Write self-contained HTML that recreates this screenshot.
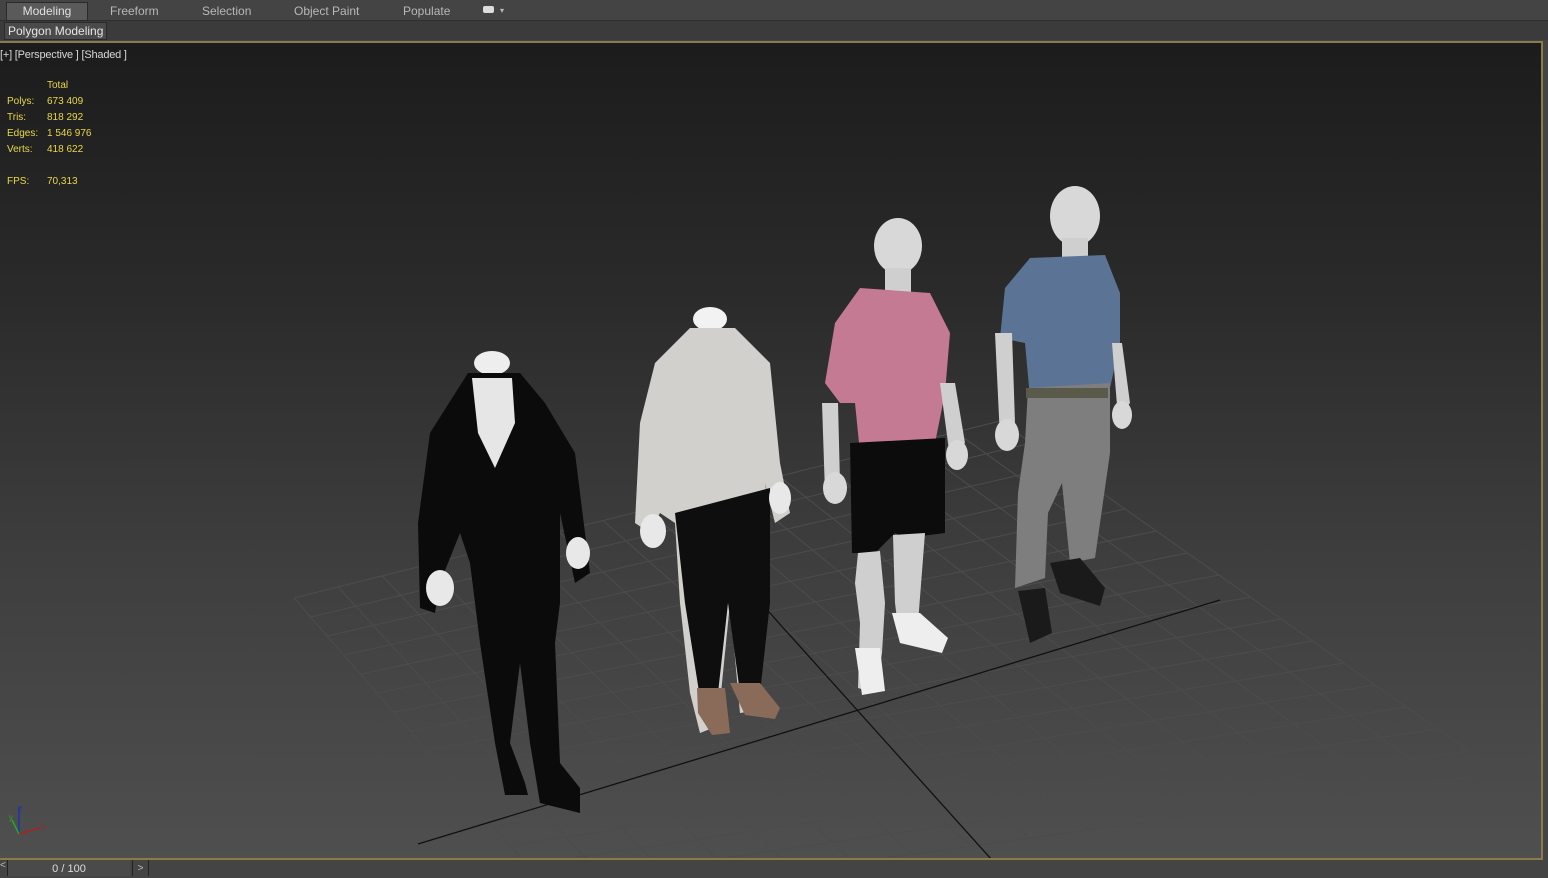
<!DOCTYPE html>
<html><head><meta charset="utf-8"><style>
html,body{margin:0;padding:0;width:1548px;height:876px;overflow:hidden;background:#444;font-family:"Liberation Sans",sans-serif}
#top{position:absolute;left:0;top:0;width:1548px;height:20px;background:#444;border-bottom:1px solid #2e2e2e}
.tab{position:absolute;top:4px;font-size:12px;color:#b8b8b8}
#mod{position:absolute;left:6px;top:2px;width:80px;height:17px;background:#5a5a5a;border:1px solid #2a2a2a;color:#e0e0e0;font-size:12px;text-align:center;line-height:17px}
#row2{position:absolute;left:0;top:21px;width:1548px;height:19px;background:#3b3b3b}
#pm{position:absolute;left:4px;top:1px;height:16px;padding:0 3px;background:#4a4a4a;border:1px solid #2a2a2a;color:#e6e6e6;font-size:12px;line-height:16px}
#vp{position:absolute;left:0;top:41px;width:1541px;height:815px;border:2px solid #8b7b4a;border-left:none;background:linear-gradient(#1c1c1c 0%,#2a2a2a 30%,#3f3f3f 65%,#4f4f4f 100%);overflow:hidden}
#lab{position:absolute;left:0;top:6px;color:#d8d8d8;font-size:11px;letter-spacing:-0.2px}
.st{position:absolute;color:#e8d84a;font-size:10px;line-height:16px}
#bot{position:absolute;left:0;top:860px;width:1548px;height:16px;background:#444}
</style></head><body>
<div id="top">
<div id="mod">Modeling</div>
<div class="tab" style="left:110px">Freeform</div>
<div class="tab" style="left:202px">Selection</div>
<div class="tab" style="left:294px">Object Paint</div>
<div class="tab" style="left:403px">Populate</div>
<div style="position:absolute;left:483px;top:6px;width:11px;height:7px;background:#ddd;border-radius:2px"></div>
<div style="position:absolute;left:500px;top:6px;color:#bbb;font-size:8px">▾</div>
</div>
<div id="row2"><div id="pm">Polygon Modeling</div></div>
<div id="vp">
<svg width="1541" height="815" style="position:absolute;left:0;top:0">
<g id="grid" stroke="#4c4c4c" stroke-width="1" fill="none"></g>
<line x1="418" y1="801" x2="1220" y2="557" stroke="#111" stroke-width="1.3"/>
<line x1="760" y1="559" x2="992" y2="817" stroke="#111" stroke-width="1.3"/>
<g>
<ellipse cx="492" cy="320" rx="18" ry="12" fill="#eee"/>
<path d="M468 330 L520 330 L545 360 L575 410 L590 530 L575 540 L560 470 L560 560 L555 600 L560 720 L580 745 L580 770 L540 760 L530 700 L520 620 L510 700 L525 740 L528 752 L505 752 L495 700 L480 600 L470 520 L460 490 L440 540 L435 570 L420 565 L418 480 L430 390 Z" fill="#0b0b0b"/>
<path d="M472 335 L512 335 L515 380 L495 425 L478 390 Z" fill="#e6e6e6"/>
<ellipse cx="440" cy="545" rx="14" ry="18" fill="#e8e8e8"/>
<ellipse cx="578" cy="510" rx="12" ry="16" fill="#e8e8e8"/>
</g>
<g>
<ellipse cx="710" cy="276" rx="17" ry="12" fill="#f2f2f2"/>
<path d="M690 285 L735 285 L770 320 L780 420 L790 470 L775 480 L765 440 L770 470 L760 650 L775 665 L740 670 L730 560 L720 660 L725 680 L700 690 L690 650 L680 560 L675 480 L660 470 L650 490 L635 480 L640 380 L655 320 Z" fill="#d2d0cc"/>
<path d="M675 470 L770 445 L770 560 L760 650 L740 650 L728 560 L718 650 L700 655 L685 560 Z" fill="#0e0e0e"/>
<path d="M697 645 L725 645 L730 690 L712 692 L698 670 Z" fill="#8a6a58"/>
<path d="M730 640 L760 640 L780 665 L775 676 L745 672 Z" fill="#8a6a58"/>
<ellipse cx="653" cy="488" rx="13" ry="17" fill="#e8e8e8"/>
<ellipse cx="780" cy="455" rx="11" ry="16" fill="#e8e8e8"/>
</g>
<g>
<ellipse cx="898" cy="203" rx="24" ry="28" fill="#d8d8d8"/>
<rect x="885" y="225" width="26" height="25" fill="#cfcfcf"/>
<path d="M860 245 L930 250 L950 290 L945 350 L935 400 L860 410 L855 360 L840 360 L825 340 L835 280 Z" fill="#c47a92"/>
<path d="M850 400 L945 395 L945 490 L905 495 L895 490 L875 510 L852 510 Z" fill="#0c0c0c"/>
<path d="M858 510 L880 508 L885 560 L882 610 L875 650 L858 645 L860 580 L855 540 Z" fill="#cfcfcf"/>
<path d="M893 492 L925 490 L918 580 L920 600 L900 600 L895 560 Z" fill="#cfcfcf"/>
<path d="M855 605 L880 605 L885 648 L862 652 Z" fill="#eee"/>
<path d="M892 570 L920 570 L948 595 L942 610 L900 600 Z" fill="#eee"/>
<path d="M822 360 L838 360 L840 440 L825 450 Z" fill="#cfcfcf"/>
<path d="M940 340 L955 340 L965 400 L950 415 Z" fill="#cfcfcf"/>
<ellipse cx="835" cy="445" rx="12" ry="16" fill="#d8d8d8"/>
<ellipse cx="957" cy="412" rx="11" ry="15" fill="#d8d8d8"/>
</g>
<g>
<ellipse cx="1075" cy="173" rx="25" ry="30" fill="#d8d8d8"/>
<rect x="1062" y="195" width="26" height="25" fill="#cfcfcf"/>
<path d="M1030 215 L1105 212 L1120 250 L1120 300 L1110 345 L1030 355 L1025 300 L1000 295 L1005 245 Z" fill="#5b7394"/>
<path d="M1028 345 L1110 340 L1110 410 L1100 480 L1095 515 L1070 520 L1062 440 L1048 470 L1045 535 L1015 545 L1018 450 L1025 400 Z" fill="#7e7e7e"/>
<rect x="1026" y="345" width="82" height="10" fill="#5a5a4a"/>
<path d="M1018 548 L1045 545 L1052 590 L1030 600 Z" fill="#1a1a1a"/>
<path d="M1050 520 L1080 515 L1105 545 L1100 563 L1060 550 Z" fill="#1a1a1a"/>
<path d="M995 290 L1012 290 L1015 380 L1000 395 Z" fill="#cfcfcf"/>
<path d="M1112 300 L1122 300 L1130 360 L1118 375 Z" fill="#cfcfcf"/>
<ellipse cx="1007" cy="392" rx="12" ry="16" fill="#d8d8d8"/>
<ellipse cx="1122" cy="372" rx="10" ry="14" fill="#d8d8d8"/>
</g>
<line x1="19" y1="791" x2="19" y2="764" stroke="#2233aa" stroke-width="1.5"/>
<line x1="19" y1="791" x2="40" y2="785" stroke="#aa2222" stroke-width="1.5"/>
<line x1="19" y1="791" x2="12" y2="777" stroke="#22aa22" stroke-width="1.5"/>
<text x="18" y="768" fill="#2233aa" font-size="8" font-family="Liberation Sans">z</text>
<text x="41" y="786" fill="#aa2222" font-size="8" font-family="Liberation Sans">x</text>
<text x="9" y="777" fill="#22aa22" font-size="8" font-family="Liberation Sans">y</text>
</svg>
<div id="lab">[+] [Perspective ] [Shaded ]</div>
<div class="st" style="left:7px;top:35px"><br>Polys:<br>Tris:<br>Edges:<br>Verts:<br><br>FPS:</div>
<div class="st" style="left:47px;top:35px">Total<br>673 409<br>818 292<br>1 546 976<br>418 622<br><br>70,313</div>
</div>
<div id="bot">
<div style="position:absolute;left:0;top:0;width:7px;height:16px;border-right:1px solid #222;color:#bbb;font-size:10px">&lt;</div>
<div style="position:absolute;left:8px;top:0;width:122px;height:16px;background:#4a4a4a;color:#ddd;font-size:11px;text-align:center;line-height:18px">0 / 100</div>
<div style="position:absolute;left:132px;top:0;width:15px;height:16px;border-left:1px solid #222;border-right:1px solid #222;color:#bbb;font-size:10px;text-align:center;line-height:18px">&gt;</div>
</div>
<script>
var g=document.getElementById('grid');
var A=[294,555],B=[1000,378],C=[1500,730],D=[560,860];
function L(p,q,t){return [p[0]+(q[0]-p[0])*t,p[1]+(q[1]-p[1])*t];}
var n=16,s='';
for(var i=0;i<=n;i++){var t=i/n;
var p=L(A,B,t),q=L(D,C,t);s+='<line x1="'+p[0]+'" y1="'+p[1]+'" x2="'+q[0]+'" y2="'+q[1]+'"/>';
p=L(A,D,t);q=L(B,C,t);s+='<line x1="'+p[0]+'" y1="'+p[1]+'" x2="'+q[0]+'" y2="'+q[1]+'"/>';}
g.innerHTML=s;
</script>
</body></html>
